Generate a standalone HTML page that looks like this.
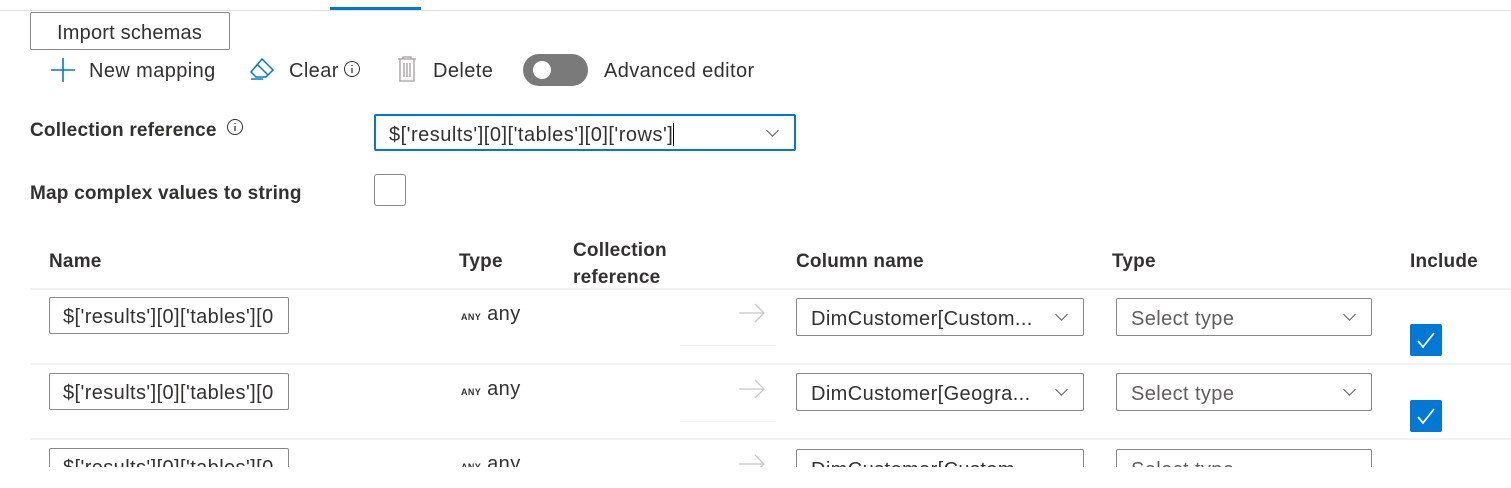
<!DOCTYPE html><html><head><style>
body{margin:0;width:1511px;height:488px;background:#fff;position:relative;overflow:hidden;font-family:"Liberation Sans",sans-serif;color:#323130;font-size:20px;letter-spacing:0.4px}
.a{position:absolute;white-space:nowrap}
.box{position:absolute;border:1px solid #8a8886;border-radius:2px;box-sizing:border-box;background:#fff;overflow:hidden}
.hdr{font-weight:bold;color:#323130;font-size:19px;letter-spacing:0.2px}
.chev{position:absolute;width:8px;height:8px;border-right:1.5px solid #605e5c;border-bottom:1.5px solid #605e5c;transform:rotate(45deg)}
.cb{position:absolute;width:32px;height:32px;background:#0078d4;border-radius:2px}
.line{position:absolute;height:2px;background:#f3f2f1;left:30px;right:0}
</style></head><body>
<div class="a" style="left:0;top:10px;width:1511px;height:1px;background:#e1dfdd"></div>
<div class="a" style="left:330px;top:7px;width:91px;height:3px;background:#0078d4"></div>
<div class="box" style="left:30px;top:12px;width:200px;height:38px;border-radius:2px"><span class="a" style="left:26px;top:9px;letter-spacing:0.2px">Import schemas</span></div>
<svg class="a" style="left:50px;top:57px" width="26" height="26"><path d="M13 1V25M1 13H25" stroke="#0078d4" stroke-width="1.6"/></svg>
<span class="a" style="left:89px;top:60px">New mapping</span>
<svg class="a" style="left:248px;top:56px" width="28" height="28"><path d="M14 3L25 14L18 21H8L3 16ZM9 8L20 19M3 23H15" stroke="#0078d4" stroke-width="1.5" fill="none"/></svg>
<span class="a" style="left:289px;top:60px">Clear</span>
<svg class="a" style="left:343px;top:60px" width="18" height="18"><circle cx="9" cy="9" r="7.5" stroke="#323130" fill="none"/><path d="M9 8V13M9 5V6" stroke="#323130" stroke-width="1.3"/></svg>
<svg class="a" style="left:395px;top:55px" width="24" height="28"><path d="M3 4H21M8 4V2H16V4M5 4V26H19V4M9 8V22M12 8V22M15 8V22" stroke="#a19f9d" stroke-width="1.3" fill="none"/></svg>
<span class="a" style="left:433px;top:60px">Delete</span>
<div class="a" style="left:523px;top:54px;width:65px;height:32px;border-radius:16px;background:#7a7a7a"></div>
<div class="a" style="left:533px;top:61px;width:18px;height:18px;border-radius:9px;background:#fff"></div>
<span class="a" style="left:604px;top:60px">Advanced editor</span>
<span class="a hdr" style="left:30px;top:120px">Collection reference</span>
<svg class="a" style="left:226px;top:118px" width="18" height="18"><circle cx="9" cy="9" r="7.5" stroke="#323130" fill="none"/><path d="M9 8V13M9 5V6" stroke="#323130" stroke-width="1.3"/></svg>
<div class="box" style="left:374px;top:114px;width:422px;height:37px;border:2px solid #0078d4"><span class="a" style="left:13px;top:7px;letter-spacing:0.5px">$['results'][0]['tables'][0]['rows']<span style="display:inline-block;width:1px;height:23px;background:#000;vertical-align:-5px"></span></span><div class="chev" style="left:392px;top:10px"></div></div>
<span class="a hdr" style="left:30px;top:183px">Map complex values to string</span>
<div class="box" style="left:374px;top:174px;width:32px;height:32px;border-radius:3px"></div>
<span class="a hdr" style="left:49px;top:251px">Name</span>
<span class="a hdr" style="left:459px;top:251px">Type</span>
<span class="a hdr" style="left:573px;top:237px;line-height:27px">Collection<br>reference</span>
<span class="a hdr" style="left:796px;top:251px">Column name</span>
<span class="a hdr" style="left:1112px;top:251px">Type</span>
<span class="a hdr" style="left:1410px;top:251px">Include</span>
<div class="line" style="top:288px"></div>
<div class="line" style="top:363px"></div>
<div class="line" style="top:438px"></div>
<div class="a" style="left:680px;top:345px;width:96px;height:1px;background:#f3f2f1"></div>
<div class="a" style="left:680px;top:421px;width:96px;height:1px;background:#f3f2f1"></div>
<div class="a" style="left:0;top:0;width:1511px;height:467px;overflow:hidden">
<div class="box" style="left:49px;top:297px;width:240px;height:37px"><span class="a" style="left:13px;top:8px">$['results'][0]['tables'][0</span></div>
<div class="box" style="left:49px;top:373px;width:240px;height:37px"><span class="a" style="left:13px;top:8px">$['results'][0]['tables'][0</span></div>
<div class="box" style="left:49px;top:448px;width:240px;height:37px"><span class="a" style="left:13px;top:8px">$['results'][0]['tables'][0</span></div>
<span class="a" style="left:461px;top:303px"><span style="font-size:9px;font-weight:bold">ANY</span> any</span>
<span class="a" style="left:461px;top:378px"><span style="font-size:9px;font-weight:bold">ANY</span> any</span>
<span class="a" style="left:461px;top:453px"><span style="font-size:9px;font-weight:bold">ANY</span> any</span>
<svg class="a" style="left:738px;top:302px" width="28" height="22"><path d="M1 11H26M17 2L26 11L17 20" stroke="#c8c6c4" stroke-width="1.3" fill="none"/></svg>
<svg class="a" style="left:738px;top:378px" width="28" height="22"><path d="M1 11H26M17 2L26 11L17 20" stroke="#c8c6c4" stroke-width="1.3" fill="none"/></svg>
<svg class="a" style="left:738px;top:453px" width="28" height="22"><path d="M1 11H26M17 2L26 11L17 20" stroke="#c8c6c4" stroke-width="1.3" fill="none"/></svg>
<div class="box" style="left:796px;top:298px;width:288px;height:38px"><span class="a" style="left:14px;top:9px">DimCustomer[Custom...</span><div class="chev" style="left:260px;top:11px"></div></div>
<div class="box" style="left:796px;top:373px;width:288px;height:38px"><span class="a" style="left:14px;top:9px">DimCustomer[Geogra...</span><div class="chev" style="left:260px;top:11px"></div></div>
<div class="box" style="left:796px;top:449px;width:288px;height:38px"><span class="a" style="left:14px;top:9px">DimCustomer[Custom...</span></div>
<div class="box" style="left:1116px;top:298px;width:256px;height:38px"><span class="a" style="left:14px;top:9px;color:#605e5c">Select type</span><div class="chev" style="left:228px;top:11px"></div></div>
<div class="box" style="left:1116px;top:373px;width:256px;height:38px"><span class="a" style="left:14px;top:9px;color:#605e5c">Select type</span><div class="chev" style="left:228px;top:11px"></div></div>
<div class="box" style="left:1116px;top:449px;width:256px;height:38px"><span class="a" style="left:14px;top:9px;color:#605e5c">Select type</span></div>
<div class="cb" style="left:1410px;top:324px"><svg width="32" height="32"><path d="M8 17L13 23L24 9" stroke="#fff" stroke-width="1.8" fill="none"/></svg></div>
<div class="cb" style="left:1410px;top:400px"><svg width="32" height="32"><path d="M8 17L13 23L24 9" stroke="#fff" stroke-width="1.8" fill="none"/></svg></div>
</div>
</body></html>
